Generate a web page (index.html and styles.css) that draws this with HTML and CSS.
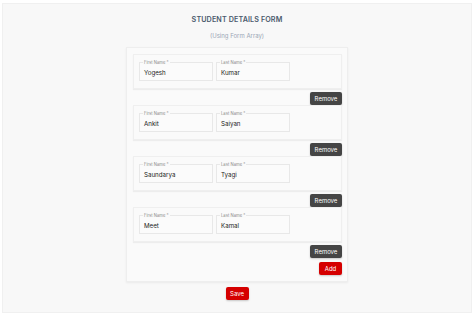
FILE: index.html
```html
<!DOCTYPE html>
<html>
<head>
<meta charset="utf-8">
<link rel="stylesheet" href="styles.css">
</head>
<body>
<div class="frame">
  <h1 class="title">STUDENT DETAILS FORM</h1>
  <p class="subtitle">(Using Form Array)</p>
  <div class="card">
    <div class="row">
      <div class="field"><span class="label">First Name *</span><span class="value">Yogesh</span></div>
      <div class="field"><span class="label">Last Name *</span><span class="value">Kumar</span></div>
    </div>
    <div class="actions"><button class="btn dark">Remove</button></div>
    <div class="row">
      <div class="field"><span class="label">First Name *</span><span class="value">Ankit</span></div>
      <div class="field"><span class="label">Last Name *</span><span class="value">Saiyan</span></div>
    </div>
    <div class="actions"><button class="btn dark">Remove</button></div>
    <div class="row">
      <div class="field"><span class="label">First Name *</span><span class="value">Saundarya</span></div>
      <div class="field"><span class="label">Last Name *</span><span class="value">Tyagi</span></div>
    </div>
    <div class="actions"><button class="btn dark">Remove</button></div>
    <div class="row">
      <div class="field"><span class="label">First Name *</span><span class="value">Meet</span></div>
      <div class="field"><span class="label">Last Name *</span><span class="value">Kamal</span></div>
    </div>
    <div class="actions"><button class="btn dark">Remove</button></div>
    <div class="actions add"><button class="btn red">Add</button></div>
  </div>
  <div class="save-wrap"><button class="btn red">Save</button></div>
</div>
</body>
</html>
```
FILE: styles.css
```css
* { box-sizing: border-box; }
html, body { margin: 0; padding: 0; background: #ffffff; }
body { font-family: Inter, "Noto Sans", sans-serif; }
.frame {
  margin: 3px 2px 0 2px;
  height: 310px;
  background: #f8f8f8;
  border: 1px solid #f0f0f0;
  padding-top: 11px;
}
.title {
  margin: 0;
  text-align: center;
  font-size: 7.2px;
  font-weight: 600;
  color: #4b5a6d;
  letter-spacing: 0.1px;
  line-height: 10px;
}
.subtitle {
  margin: 6px 0 0 0;
  text-align: center;
  font-size: 6px;
  color: #9ba6b6;
  line-height: 9px;
}
.card {
  width: 222px;
  margin: 7px auto 0 auto;
  background: #fafafa;
  border: 1px solid #eeeeee;
  box-shadow: 0 1px 2px rgba(0,0,0,0.06);
  padding: 6px 5px 6px 6px;
  display: flex;
  flex-direction: column;
}
.row {
  height: 35px;
  border: 1px solid #efefef;
  background: #fafafa;
  box-shadow: 0 1px 1px rgba(0,0,0,0.05);
  display: flex;
  gap: 3px;
  padding: 7px 0 0 5px;
}
.field {
  position: relative;
  width: 74px;
  height: 19px;
  border: 1px solid #e8e8e8;
  background: #fbfbfb;
  padding: 0 4px;
  display: flex;
  align-items: center;
}
.label {
  position: absolute;
  top: -3px;
  left: 3px;
  padding: 0 1px;
  background: #fafafa;
  font-size: 4.2px;
  line-height: 5px;
  color: #8a8a8a;
}
.value {
  font-size: 6.2px;
  color: #222;
  padding-top: 2px;
}
.actions {
  display: flex;
  justify-content: flex-end;
  margin-top: 3px;
}
.actions.add { margin-top: 4px; }
.btn {
  border: 0;
  border-radius: 2px;
  font-family: Inter, "Noto Sans", sans-serif;
  font-size: 6px;
  color: #ffffff;
  height: 13px;
  padding: 0;
  line-height: 13px;
  box-shadow: 0 1px 2px rgba(0,0,0,0.2);
}
.btn.dark { background: #454545; width: 32px; }
.btn.red { background: #d50000; width: 23px; }
.save-wrap {
  display: flex;
  justify-content: center;
  margin-top: 5px;
}
```
